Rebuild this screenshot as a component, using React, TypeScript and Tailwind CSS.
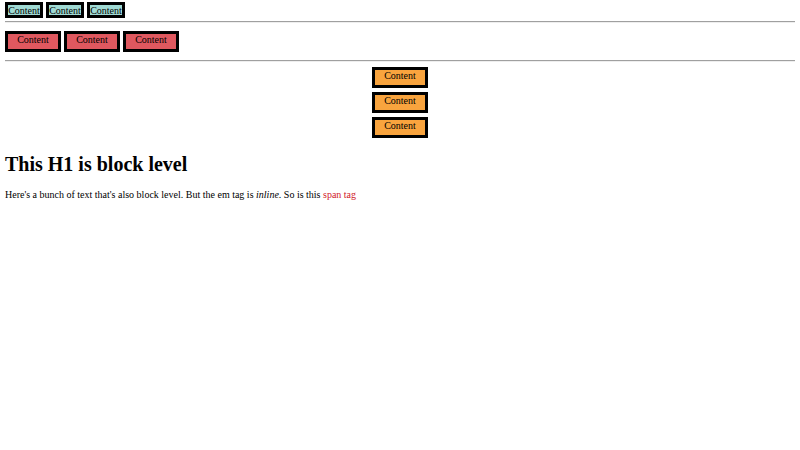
export default function App() {
  const items = ['Content', 'Content', 'Content']
  return (
    <div className="min-h-screen bg-white px-[5px] pt-[2px] text-[10px] leading-[12px] text-black" style={{ fontFamily: '"Liberation Serif", serif' }}>
      <div className="flex gap-[3px]">
        {items.map((t, i) => (
          <span key={i} className="h-[16px] w-[38px] border-[3px] border-black bg-[#a0dad3] text-center leading-[11px]">
            {t}
          </span>
        ))}
      </div>
      <hr className="mt-[3px] border-t border-b border-t-[#a0a0a0] border-b-[#eeeeee]" />
      <div className="mt-[8px] flex gap-[3px]">
        {items.map((t, i) => (
          <div key={i} className="h-[21px] w-[56px] border-[3px] border-black bg-[#e0585f] pt-[1px] text-center leading-[10px]">
            {t}
          </div>
        ))}
      </div>
      <hr className="mt-[8px] border-t border-b border-t-[#a0a0a0] border-b-[#eeeeee]" />
      <div className="mt-[5px] flex flex-col items-center gap-[4px]">
        {items.map((t, i) => (
          <div key={i} className="h-[21px] w-[56px] border-[3px] border-black bg-[#f9a43e] pt-[1px] text-center leading-[10px]">
            {t}
          </div>
        ))}
      </div>
      <h1 className="mt-[14px] text-[20px] font-bold leading-[24px]">This H1 is block level</h1>
      <p className="mt-[13px]">
        Here's a bunch of text that's also block level. But the em tag is <em>inline</em>. So is this{' '}
        <span className="text-[#d0202a]">span tag</span>
      </p>
    </div>
  )
}
